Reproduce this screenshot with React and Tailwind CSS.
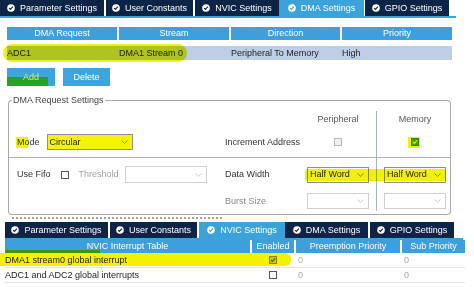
import React from 'react';

function TabIcon({ color }) {
  return (
    <svg width="8" height="8" viewBox="0 0 8 8">
      <circle cx="4" cy="4" r="3.8" fill="#fff" />
      <path d="M2.1 4.1 L3.4 5.4 L5.9 2.7" fill="none" stroke={color} strokeWidth="1.2" />
    </svg>
  );
}

function Tab({ label, active, className }) {
  return (
    <div
      className={`flex h-full items-center justify-center gap-[5px] text-white ${
        active ? 'bg-[#3ca2da]' : 'bg-[#0c2446]'
      } ${className}`}
    >
      <TabIcon color={active ? '#3ca2da' : '#0c2446'} />
      <span>{label}</span>
    </div>
  );
}

function Chevron({ color }) {
  return (
    <svg width="7" height="4" viewBox="0 0 7 4">
      <path d="M0.5 0.5 L3.5 3.3 L6.5 0.5" fill="none" stroke={color} strokeWidth="0.9" />
    </svg>
  );
}

function Select({ value, light, className }) {
  return (
    <div
      className={`flex items-center justify-between border pl-[2px] pr-[4px] ${
        light ? 'border-[#cfcfcf]' : 'border-[#8f8f8f]'
      } ${className}`}
    >
      <span className="text-[#222]">{value}</span>
      <Chevron color={light ? '#c4c4c4' : '#7a7a7a'} />
    </div>
  );
}

function Box({ checked, className }) {
  return (
    <div className={`flex h-[8px] w-[8px] items-center justify-center border ${className}`}>
      {checked && (
        <svg width="6" height="6" viewBox="0 0 6 6">
          <path d="M1 3 L2.4 4.5 L5 1.4" fill="none" stroke={checked} strokeWidth="1.1" />
        </svg>
      )}
    </div>
  );
}

function SettingsRow({ height, left, label, periph, memory }) {
  return (
    <div className={`flex items-center ${height}`}>
      <div className="flex w-[216px] items-center pl-[8px]">{left}</div>
      <div className="w-[80px] text-[#333]">{label}</div>
      <div className="flex w-[66px] justify-center">{periph}</div>
      <div className="flex w-[10px] justify-center self-stretch">
        <div className="w-px bg-[#a4b2cc]" />
      </div>
      <div className="flex w-[68px] justify-center">{memory}</div>
    </div>
  );
}

export default function App() {
  return (
    <div className="relative h-[287px] w-[474px] overflow-hidden bg-white font-['Liberation_Sans',Arial,sans-serif] text-[9px] leading-[11px]">
      {/* top panel: DMA settings */}
      <div className="flex h-[18px] w-[456px] border-b-2 border-[#3ca2da]">
        <Tab label="Parameter Settings" className="w-[104px]" />
        <Tab label="User Constants" className="ml-[2px] w-[87px]" />
        <Tab label="NVIC Settings" className="ml-[2px] w-[84px]" />
        <Tab label="DMA Settings" active className="w-[85px]" />
        <Tab label="GPIO Settings" className="ml-[1px] w-[84px]" />
      </div>

      <div className="ml-[7px] mt-[9px] flex h-[13px] gap-[2px] text-white">
        <div className="flex w-[110px] items-center justify-center bg-[#3d9fdb]">DMA Request</div>
        <div className="flex w-[110px] items-center justify-center bg-[#3d9fdb]">Stream</div>
        <div className="flex w-[109px] items-center justify-center bg-[#3d9fdb]">Direction</div>
        <div className="flex w-[110px] items-center justify-center bg-[#3d9fdb]">Priority</div>
      </div>
      <div className="ml-[7px] mt-[6px] flex h-[14px] w-[445px] gap-[2px] bg-[#bccfe6] text-[#222]">
        <div className="flex w-[110px] items-center">ADC1</div>
        <div className="flex w-[110px] items-center">DMA1 Stream 0</div>
        <div className="flex w-[109px] items-center">Peripheral To Memory</div>
        <div className="flex w-[110px] items-center">High</div>
      </div>

      <div className="ml-[7px] mt-[8px] flex h-[18px] gap-[8px]">
        <div className="relative flex w-[48px] items-center justify-center overflow-hidden bg-[#3fa4dc]">
          <div className="absolute bottom-0 left-0 h-[9px] w-[41px] bg-[#27a12a]" />
          <span className="relative text-[#d9f04a]">Add</span>
        </div>
        <div className="flex w-[47px] items-center justify-center bg-[#3fa4dc] text-white">Delete</div>
      </div>

      <div className="ml-[8px] mt-[9px] w-[443px]">
        <div className="flex h-[11px] items-end">
          <div className="h-[6px] w-[4px] rounded-tl-[4px] border-l border-t border-[#a8a8a8]" />
          <span className="self-center px-[1px] text-[#444]">DMA Request Settings</span>
          <div className="h-[6px] flex-1 rounded-tr-[4px] border-r border-t border-[#a8a8a8]" />
        </div>
        <div className="rounded-b-[4px] border-x border-b border-[#a8a8a8] pb-[3px] pt-[5px]">
          <SettingsRow
            height="h-[16px]"
            periph={<span className="text-[#555]">Peripheral</span>}
            memory={<span className="text-[#555]">Memory</span>}
          />
          <SettingsRow
            height="h-[30px]"
            left={
              <>
                <span className="text-[#333]">Mode</span>
                <Select value="Circular" className="ml-[7px] h-[16px] w-[86px] bg-[#f5f500]" />
              </>
            }
            label="Increment Address"
            periph={<Box className="border-[#b8b8b8] bg-[#f0f0f0]" />}
            memory={<Box checked="#ffffff" className="border-[#3b8a3b] bg-[#45a845]" />}
          />
          <div className="h-px bg-[#a4b2cc]" />
          <SettingsRow
            height="h-[33px]"
            left={
              <>
                <span className="text-[#333]">Use Fifo</span>
                <Box className="ml-[10px] border-[#555] bg-white" />
                <span className="ml-[10px] text-[#a0a0a0]">Threshold</span>
                <Select light value="" className="ml-[6px] h-[17px] w-[82px]" />
              </>
            }
            label="Data Width"
            periph={<Select value="Half Word" className="h-[16px] w-[62px]" />}
            memory={<Select value="Half Word" className="h-[16px] w-[62px]" />}
          />
          <SettingsRow
            height="h-[20px]"
            label={<span className="text-[#888]">Burst Size</span>}
            periph={<Select light value="" className="h-[16px] w-[62px]" />}
            memory={<Select light value="" className="h-[16px] w-[62px]" />}
          />
        </div>
      </div>

      {/* edge of the cut-off capture between the two panels */}
      <div className="ml-[12px] mt-[2px] h-[2px] w-[210px] border-t-2 border-dotted border-[#a0a0a0]" />

      {/* bottom panel: NVIC settings */}
      <div className="ml-[5px] mt-[3px] flex h-[18px] w-[458px] border-b-2 border-[#3ca2da]">
        <Tab label="Parameter Settings" className="w-[103px]" />
        <Tab label="User Constants" className="ml-[2px] w-[87px]" />
        <Tab label="NVIC Settings" active className="ml-[2px] w-[86px]" />
        <Tab label="DMA Settings" className="w-[83px]" />
        <Tab label="GPIO Settings" className="ml-[2px] w-[84px]" />
      </div>

      <div className="ml-[5px] flex h-[13px] gap-[2px] text-white">
        <div className="flex w-[245px] items-center justify-center bg-[#3d9fdb]">NVIC Interrupt Table</div>
        <div className="flex w-[42px] items-center justify-center bg-[#3d9fdb]">Enabled</div>
        <div className="flex w-[104px] items-center justify-center bg-[#3d9fdb]">Preemption Priority</div>
        <div className="flex w-[63px] items-center justify-center bg-[#3d9fdb]">Sub Priority</div>
      </div>
      <div className="ml-[5px] w-[460px] text-[#222]">
        <div className="flex h-[15px] gap-[2px] border-b border-[#e4e4e4]">
          <div className="flex w-[245px] items-center">DMA1 stream0 global interrupt</div>
          <div className="flex w-[42px] items-center justify-center">
            <Box checked="#555555" className="border-[#888] bg-[#d6d6d6]" />
          </div>
          <div className="flex w-[104px] items-center pl-[2px] text-[#aaa]">0</div>
          <div className="flex w-[63px] items-center pl-[2px] text-[#aaa]">0</div>
        </div>
        <div className="flex h-[15px] gap-[2px] border-b border-[#e4e4e4]">
          <div className="flex w-[245px] items-center">ADC1 and ADC2 global interrupts</div>
          <div className="flex w-[42px] items-center justify-center">
            <Box className="border-[#555] bg-white" />
          </div>
          <div className="flex w-[104px] items-center pl-[2px] text-[#aaa]">0</div>
          <div className="flex w-[63px] items-center pl-[2px] text-[#aaa]">0</div>
        </div>
      </div>

      {/* highlighter marks drawn over the capture */}
      <div className="pointer-events-none absolute left-[3px] top-[44px] h-[18px] w-[184px] rounded-[9px] bg-[#eef020] mix-blend-multiply" />
      <div className="pointer-events-none absolute left-[16px] top-[137px] h-[11px] w-[12px] bg-[#f2f200] mix-blend-multiply" />
      <div className="pointer-events-none absolute left-[408px] top-[137px] h-[11px] w-[12px] bg-[#f2f200] mix-blend-multiply" />
      <div className="pointer-events-none absolute left-[305px] top-[169px] h-[12px] w-[141px] rounded-[3px] bg-[#f2f200] mix-blend-multiply" />
      <div className="pointer-events-none absolute left-[5px] top-[250px] h-[3px] w-[95px] bg-[#f2f200] mix-blend-multiply" />
      <div className="pointer-events-none absolute left-0 top-[253px] h-[13px] w-[291px] rounded-r-[6px] bg-[#f2f200] mix-blend-multiply" />
    </div>
  );
}
